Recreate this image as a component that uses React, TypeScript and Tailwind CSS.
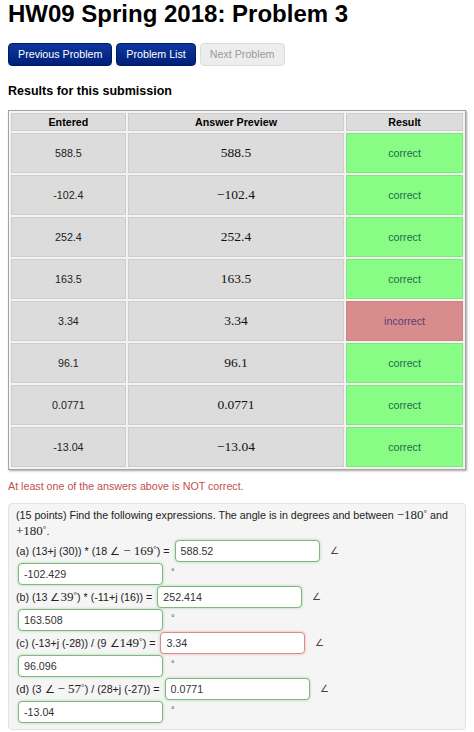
const sans = { fontFamily: '"Liberation Sans", Arial, sans-serif' };

type Row = { entered: string; preview: string; ok: boolean };

const rows: Row[] = [
  { entered: "588.5", preview: "588.5", ok: true },
  { entered: "-102.4", preview: "\u2212102.4", ok: true },
  { entered: "252.4", preview: "252.4", ok: true },
  { entered: "163.5", preview: "163.5", ok: true },
  { entered: "3.34", preview: "3.34", ok: false },
  { entered: "96.1", preview: "96.1", ok: true },
  { entered: "0.0771", preview: "0.0771", ok: true },
  { entered: "-13.04", preview: "\u221213.04", ok: true },
];

function M({ children }: { children: React.ReactNode }) {
  return <span className="font-['Liberation_Serif',serif] text-[13px] leading-none">{children}</span>;
}

function Deg() {
  return <span className="font-['Liberation_Serif',serif] text-[9px] leading-none align-[3px]">°</span>;
}

function Answer({ value, bad, className = "" }: { value: string; bad?: boolean; className?: string }) {
  return (
    <input
      readOnly
      value={value}
      className={
        "w-[145px] h-[22px] shrink-0 rounded-[4px] border bg-white px-[5px] text-[10.7px] text-[#333] outline-none " +
        (bad
          ? "border-[#d98c8c] shadow-[0_0_3px_#eaa9a9] "
          : "border-[#7fb77f] shadow-[0_0_3px_#a9d6a9] ") +
        className
      }
    />
  );
}

function Part({ label, first, second, bad }: { label: React.ReactNode; first: string; second: string; bad?: boolean }) {
  return (
    <>
      <div className="flex h-[23px] items-center">
        <span className="whitespace-nowrap">{label}</span>
        <Answer value={first} bad={bad} className="ml-[5px]" />
        <span className="ml-[10px] text-[10px] text-[#444]">∠</span>
      </div>
      <div className="flex h-[23px] items-center">
        <Answer value={second} className="ml-[2px]" />
        <span className="ml-[8px] -mt-[4px] text-[9px] text-[#444]">°</span>
      </div>
    </>
  );
}

export default function App() {
  return (
    <div className="min-h-screen bg-white px-[8px] text-black" style={sans}>
      <h1 className="text-[24px] font-bold leading-[28px]">HW09 Spring 2018: Problem 3</h1>

      <div className="mt-[15px] flex gap-[4px] text-[10.7px]">
        <button className="h-[23px] rounded-[4px] border border-[#001a66] bg-linear-to-b from-[#0f369e] to-[#002078] px-[9px] text-white">
          Previous Problem
        </button>
        <button className="h-[23px] rounded-[4px] border border-[#001a66] bg-linear-to-b from-[#0f369e] to-[#002078] px-[9px] text-white">
          Problem List
        </button>
        <button className="h-[23px] rounded-[4px] border border-[#dcdcdc] bg-[#ededed] px-[9px] text-[#9a9a9a]">
          Next Problem
        </button>
      </div>

      <h2 className="mt-[17px] text-[12.5px] font-bold leading-[16px]">Results for this submission</h2>

      <table className="mt-[11px] border-separate border-spacing-[2px] border border-[#a4a4a4] bg-[#f3f3f3] text-[10.7px] shadow-[1px_1px_2px_rgba(0,0,0,0.35)]">
        <thead>
          <tr>
            <th className="w-[115px] border border-[#cdcdcd] bg-[#dcdcdc] p-0 font-bold">
              <div className="flex h-[16px] items-center justify-center">Entered</div>
            </th>
            <th className="w-[217px] border border-[#cdcdcd] bg-[#dcdcdc] p-0 font-bold">
              <div className="flex h-[16px] items-center justify-center">Answer Preview</div>
            </th>
            <th className="w-[117px] border border-[#cdcdcd] bg-[#dcdcdc] p-0 font-bold">
              <div className="flex h-[16px] items-center justify-center">Result</div>
            </th>
          </tr>
        </thead>
        <tbody>
          {rows.map((r, i) => (
            <tr key={i}>
              <td className="border border-[#cdcdcd] bg-[#dcdcdc] p-0">
                <div className="flex h-[38px] items-center justify-center text-[#222]">{r.entered}</div>
              </td>
              <td className="border border-[#cdcdcd] bg-[#dcdcdc] p-0">
                <div className="flex h-[38px] items-center justify-center font-['Liberation_Serif',serif] text-[13.5px] text-[#111]">
                  {r.preview}
                </div>
              </td>
              <td
                className={
                  r.ok
                    ? "border border-[#7ee87a] bg-[#88fc84] p-0"
                    : "border border-[#cc8484] bg-[#d88c8c] p-0"
                }
              >
                <div
                  className={
                    "flex h-[38px] items-center justify-center " +
                    (r.ok ? "text-[#1f6b4a]" : "text-[#54407a]")
                  }
                >
                  {r.ok ? "correct" : "incorrect"}
                </div>
              </td>
            </tr>
          ))}
        </tbody>
      </table>

      <p className="mt-[9px] text-[10.7px] leading-[14px] text-[#c0504d]">
        At least one of the answers above is NOT correct.
      </p>

      <div className="mt-[10px] rounded-[4px] border border-[#e3e3e3] bg-[#f5f5f5] pb-[6px] pl-[7px] pr-[7px] pt-[3px] text-[10.7px] leading-[16px] text-[#222]">
        <p>
          (15 points) Find the following expressions. The angle is in degrees and between{" "}
          <M>−180</M>
          <Deg /> and <M>+180</M>
          <Deg />.
        </p>
        <Part
          label={
            <>
              (a) (13+j (30)) * (18 ∠ <M>− 169</M>
              <Deg />) =
            </>
          }
          first="588.52"
          second="-102.429"
        />
        <Part
          label={
            <>
              (b) (13 ∠<M>39</M>
              <Deg />) * (-11+j (16)) =
            </>
          }
          first="252.414"
          second="163.508"
        />
        <Part
          label={
            <>
              (c) (-13+j (-28)) / (9 ∠<M>149</M>
              <Deg />) =
            </>
          }
          first="3.34"
          second="96.096"
          bad
        />
        <Part
          label={
            <>
              (d) (3 ∠ <M>− 57</M>
              <Deg />) / (28+j (-27)) =
            </>
          }
          first="0.0771"
          second="-13.04"
        />
      </div>
    </div>
  );
}
